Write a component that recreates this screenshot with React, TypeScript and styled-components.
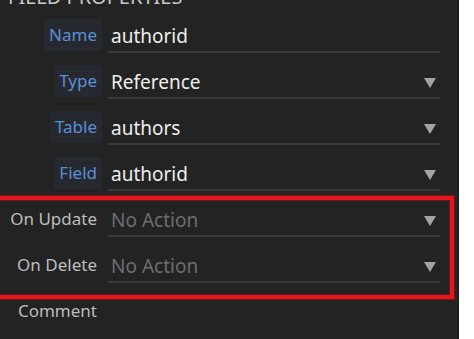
import React from "react";
import styled, { createGlobalStyle } from "styled-components";

const Global = createGlobalStyle`
  html, body { margin: 0; padding: 0; background: #ffffff; }
  body { font-family: "Noto Sans", "Open Sans", sans-serif; }
`;

const Panel = styled.div`
  width: 459px;
  height: 339px;
  background: #232323;
  overflow: hidden;
  display: flex;
  flex-direction: column;
  padding-right: 18px;
  box-sizing: border-box;
  border-right: 1px solid #1b1b1b;
`;

const Title = styled.div`
  margin-top: -15px;
  height: 24px;
  line-height: 24px;
  padding-left: 8px;
  font-size: 20px;
  text-transform: uppercase;
  color: #c8c8c8;
  margin-bottom: 4px;
  white-space: nowrap;
`;

const Row = styled.div`
  display: flex;
  height: 46px;
  gap: 6px;
`;

const LabelCell = styled.div`
  width: 102px;
  flex: none;
  display: flex;
  justify-content: flex-end;
  align-items: flex-start;
  padding-top: 6px;
`;

const Label = styled.div<{ $boxed?: boolean }>`
  height: 32px;
  line-height: 32px;
  padding: 0 5px 0 5px;
  font-size: 17px;
  background: ${(p) => (p.$boxed ? "#262a30" : "transparent")};
  color: ${(p) => (p.$boxed ? "#5b8fd6" : "#bcbcbc")};
  border-radius: 2px;
  white-space: nowrap;
`;

const ValueCell = styled.div`
  flex: 1;
  height: 40px;
  box-sizing: border-box;
  padding: 11px 4px 3px 3px;
  border-bottom: 2px solid #3a3a3a;
  display: flex;
  align-items: center;
  justify-content: space-between;
`;

const Value = styled.span<{ $muted?: boolean }>`
  font-size: 19px;
  line-height: 24px;
  color: ${(p) => (p.$muted ? "#6e6e6e" : "#eeeeee")};
  white-space: nowrap;
`;

const Arrow = styled.svg`
  width: 12px;
  height: 10px;
  flex: none;
  margin-top: 1px;
`;

const Group = styled.div`
  position: relative;
  display: flex;
  flex-direction: column;
`;

const Highlight = styled.div`
  position: absolute;
  top: -1px;
  left: -10px;
  right: -14px;
  bottom: -10px;
  border: 4px solid #e1171c;
  box-shadow: 0 0 1px 1px rgba(160, 20, 20, 0.6), inset 0 0 1px 1px rgba(160, 20, 20, 0.6);
  pointer-events: none;
`;

const Caret = () => (
  <Arrow viewBox="0 0 12 10">
    <polygon points="0,0 12,0 6,10" fill="#a3a3a3" />
  </Arrow>
);

type FieldProps = {
  label: string;
  value?: string;
  boxed?: boolean;
  muted?: boolean;
  dropdown?: boolean;
  noValue?: boolean;
};

const Field = ({ label, value, boxed, muted, dropdown, noValue }: FieldProps) => (
  <Row>
    <LabelCell>
      <Label $boxed={boxed}>{label}</Label>
    </LabelCell>
    {!noValue && (
      <ValueCell>
        <Value $muted={muted}>{value}</Value>
        {dropdown && <Caret />}
      </ValueCell>
    )}
  </Row>
);

export default function App() {
  return (
    <>
      <Global />
      <Panel>
        <Title>Field Properties</Title>
        <Field label="Name" value="authorid" boxed />
        <Field label="Type" value="Reference" boxed dropdown />
        <Field label="Table" value="authors" boxed dropdown />
        <Field label="Field" value="authorid" boxed dropdown />
        <Group>
          <Field label="On Update" value="No Action" muted dropdown />
          <Field label="On Delete" value="No Action" muted dropdown />
          <Highlight />
        </Group>
        <Field label="Comment" noValue />
      </Panel>
    </>
  );
}
